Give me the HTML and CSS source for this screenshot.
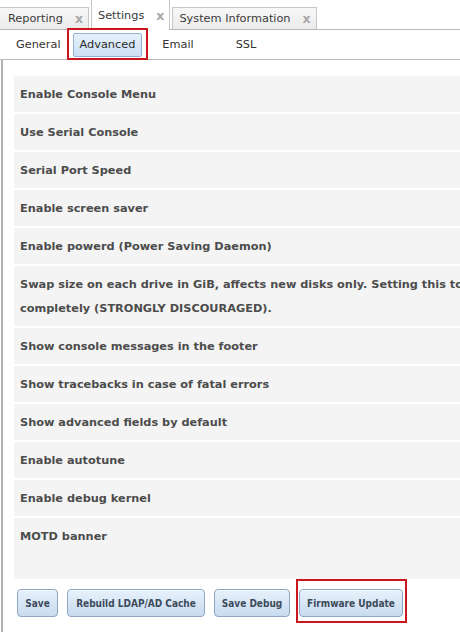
FILE: index.html
```html
<!DOCTYPE html>
<html>
<head>
<meta charset="utf-8">
<link rel="stylesheet" href="styles.css">
</head>
<body>
<div class="tabbar">
  <div class="tab tab-rep"><span class="tab-label">Reporting</span><span class="close">x</span></div>
  <div class="tab active"><span class="tab-label">Settings</span><span class="close">x</span></div>
  <div class="tab"><span class="tab-label">System Information</span><span class="close">x</span></div>
</div>
<div class="subtabs">
  <span class="subtab sub-general">General</span>
  <span class="subtab sub-advanced selected hl-adv">Advanced</span>
  <span class="subtab sub-email">Email</span>
  <span class="subtab sub-ssl">SSL</span>
</div>
<div class="panel">
  <div class="rows">
    <div class="row">Enable Console Menu</div>
    <div class="row">Use Serial Console</div>
    <div class="row">Serial Port Speed</div>
    <div class="row">Enable screen saver</div>
    <div class="row">Enable powerd (Power Saving Daemon)</div>
    <div class="row">Swap size on each drive in GiB, affects new disks only. Setting this to 0 disables swap creation<br>completely (STRONGLY DISCOURAGED).</div>
    <div class="row">Show console messages in the footer</div>
    <div class="row">Show tracebacks in case of fatal errors</div>
    <div class="row">Show advanced fields by default</div>
    <div class="row">Enable autotune</div>
    <div class="row">Enable debug kernel</div>
    <div class="row motd">MOTD banner</div>
  </div>
  <div class="buttons">
    <button class="btn btn-save">Save</button>
    <button class="btn btn-rebuild">Rebuild LDAP/AD Cache</button>
    <button class="btn btn-debug">Save Debug</button>
    <button class="btn btn-fw hl-fw">Firmware Update</button>
  </div>
</div>
</body>
</html>
```
FILE: styles.css
```css
html, body {
  margin: 0;
  padding: 0;
  width: 460px;
  height: 639px;
  overflow: hidden;
  background: #ffffff;
  font-family: "DejaVu Sans", Verdana, sans-serif;
  color: #333333;
}

.tabbar {
  display: flex;
  align-items: flex-end;
  height: 29px;
  border-bottom: 1px solid #b9b9b9;
  width: 900px;
}

.tab {
  display: flex;
  align-items: center;
  height: 21px;
  margin-right: 2px;
  border: 1px solid #c6c6c6;
  border-bottom: none;
  background: linear-gradient(#f7f7f7, #ebebeb);
  font-size: 11.3px;
  color: #3a3a3a;
  padding: 0 5px 0 6px;
}

.tab-rep {
  border-left: none;
  padding-left: 8px;
}

.tab.active {
  height: 29px;
  background: #ffffff;
  margin-bottom: -1px;
  padding-top: 1px;
}

.tab-label {
  margin-right: 12px;
}

.close {
  font-weight: bold;
  font-size: 12.5px;
  color: #a8a8a8;
}

.subtabs {
  display: flex;
  align-items: center;
  height: 29px;
  border-bottom: 1px solid #b9b9b9;
  width: 900px;
  font-size: 11.3px;
  color: #333;
}

.subtab {
  position: relative;
  display: inline-block;
  line-height: 22px;
  padding: 0 6px;
  border: 1px solid transparent;
  border-radius: 2px;
}

.sub-general { margin-left: 9px; }
.sub-advanced { margin-left: 5px; }
.sub-email { margin-left: 13px; }
.sub-ssl { margin-left: 28px; }

.subtab.selected {
  background: linear-gradient(#e6f0fb, #cde0f5);
  border-color: #93b2d5;
  color: #2b2b2b;
}

.hl-adv::after {
  content: "";
  position: absolute;
  left: -7px;
  right: -7px;
  top: -6px;
  bottom: -4px;
  border: 2px solid #c8171f;
}

.panel {
  border-left: 2px solid #b3b3b3;
  margin-left: 1px;
  width: 900px;
  height: 572px;
  box-sizing: border-box;
  padding: 16px 0 0 11px;
}

.rows {
  display: flex;
  flex-direction: column;
  gap: 2px;
}

.row {
  background: #f4f4f4;
  padding: 7px 6px 5px;
  line-height: 24px;
  font-size: 11.3px;
  font-weight: bold;
  color: #4c4c4c;
  width: 700px;
  box-sizing: border-box;
  white-space: nowrap;
}

.motd {
  height: 61px;
}

.buttons {
  display: flex;
  gap: 9px;
  margin-top: 10px;
  padding-left: 3px;
}

.btn {
  position: relative;
  height: 28px;
  padding: 0;
  border: 1px solid #8ea6c2;
  border-radius: 4px;
  background: linear-gradient(#e7f1fb, #c8dbef);
  font-family: "DejaVu Sans Condensed", "DejaVu Sans", sans-serif;
  font-stretch: condensed;
  font-size: 10px;
  font-weight: bold;
  color: #3d4b5c;
  box-shadow: inset 0 1px 0 #f5f9fd;
  text-align: center;
  white-space: nowrap;
}

.btn-save { width: 41px; }
.btn-rebuild { width: 138px; }
.btn-debug { width: 76px; }
.btn-fw { width: 104px; }

.hl-fw::after {
  content: "";
  position: absolute;
  left: -4px;
  right: -5px;
  top: -11px;
  bottom: -7px;
  border: 2px solid #c8171f;
}
```
